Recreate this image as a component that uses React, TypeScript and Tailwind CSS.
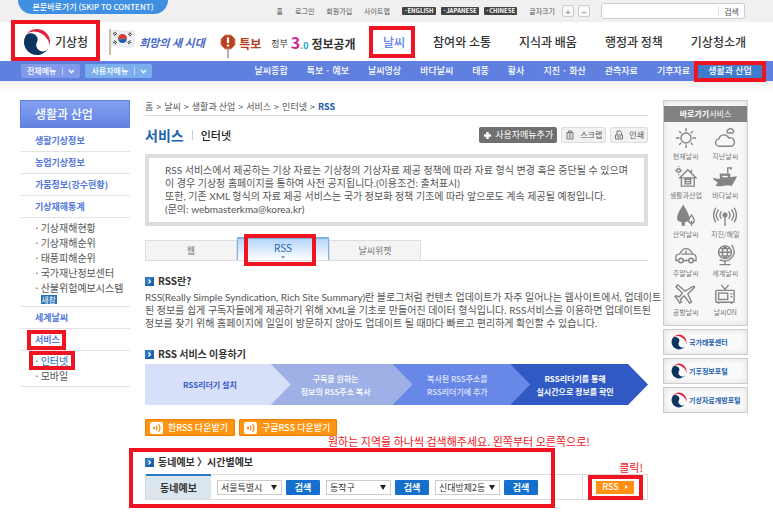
import type { ReactNode } from "react";

function Mark({ className }: { className: string }) {
  return <span aria-hidden="true" className={`pointer-events-none absolute z-20 border-4 border-[#ee1421] ${className}`} />;
}

function Taegeuk({ className }: { className: string }) {
  return (
    <svg viewBox="0 0 28 28" className={className} aria-hidden="true">
      <g transform="rotate(28 14 14)">
        <path d="M1 14A13 13 0 0 1 27 14A13 9.5 0 0 0 1 14Z" fill="#e8203f" />
        <path d="M1 14C1 7 14 6 14 14A6.5 6.5 0 0 0 27 14A13 13 0 0 1 1 14Z" fill="#0b355f" />
      </g>
    </svg>
  );
}

function Flag() {
  return (
    <svg viewBox="0 0 26 28" className="h-7 w-[26px]" aria-hidden="true">
      <path d="M1 1V27" stroke="#b9a26d" strokeWidth="1.4" />
      <path d="M2 3C8 0 14 6 25 2V18C15 22 9 15 2 18Z" fill="#eef2f6" stroke="#cfd8e0" strokeWidth=".5" />
      <path d="M9 10.500A4.500 4.500 0 0 1 18 10.500C16 13 14 9 13.500 10.500C12 12 10 12 9 10.500Z" fill="#dc3a32" />
      <path d="M9 10.500A4.500 4.500 0 0 0 18 10.500C16 13 14 9 13.500 10.500C12 12 10 12 9 10.500Z" fill="#1e5ca8" />
      <path d="M4 6l3-2M5 7.500l3-2M19 6l3 2M20 4.500l3 2M4 14l3 2M5 12.500l3 2M19 16l3-2M18.500 14.500l3-2" stroke="#333" strokeWidth="1" />
    </svg>
  );
}

function Chevron() {
  return (
    <svg viewBox="0 0 8 6" className="h-[5px] w-[7px]" fill="none" stroke="#fff" strokeWidth="1.600" aria-hidden="true">
      <path d="M1 1l3 3.500L7 1" />
    </svg>
  );
}

function NavDrop({ label, className }: { label: string; className: string }) {
  return (
    <button type="button" className={`flex h-[14px] items-center rounded-[2px] pl-[6px] text-[8px] leading-[14px] font-medium ${className}`}>
      {label}
      <span className="ml-[6px] flex h-2 items-center border-l border-white/50 px-[5px]">
        <Chevron />
      </span>
    </button>
  );
}

const subNav = ["날씨종합", "특보 · 예보", "날씨영상", "바다날씨", "태풍", "황사", "지진 · 화산", "관측자료", "기후자료"];

function Header() {
  return (
    <header>
      <div className="flex h-[22px] items-center bg-[#f0f0f0] pr-7 text-[7px] leading-[10px] text-[#555]">
        <a href="#content" className="ml-[18px] flex h-[14px] w-[150px] items-center justify-center self-start rounded-b-[14px] bg-[#3f8fe2] text-[8px] leading-3 font-medium text-white">
          본문바로가기 (SKIP TO CONTENT)
        </a>
        <nav className="ml-auto flex items-center gap-3">
          <a href="#home">홈</a>
          <a href="#login">로그인</a>
          <a href="#join">회원가입</a>
          <a href="#sitemap">사이트맵</a>
          <span className="flex gap-[5px] text-[6px] leading-[8px] font-bold text-white">
            <a href="#en" className="rounded-[1px] bg-[#444] px-[2px]">·ENGLISH</a>
            <a href="#ja" className="rounded-[1px] bg-[#444] px-[2px]">·JAPANESE</a>
            <a href="#zh" className="rounded-[1px] bg-[#444] px-[2px]">·CHINESE</a>
          </span>
          <span className="flex items-center gap-1">
            <span className="mr-[3px]">글자크기</span>
            <button type="button" aria-label="크게" className="h-3 w-3 rounded-[2px] border border-[#ccc] bg-[#f8f8f8] text-[8px] leading-[9px]">+</button>
            <button type="button" aria-label="작게" className="h-3 w-3 rounded-[2px] border border-[#ccc] bg-[#f8f8f8] text-[8px] leading-[9px]">−</button>
          </span>
        </nav>
        <form className="ml-[11px] flex h-4 w-36 items-center rounded-[3px] border border-[#ccc] bg-white">
          <input aria-label="검색어" className="h-3 min-w-0 flex-1 px-1 outline-none" />
          <button type="button" className="h-[10px] w-[26px] border-l border-[#ddd] text-[8px] leading-[9px]">검색</button>
        </form>
      </div>

      <div className="relative flex h-[39px] items-center pr-[27px] text-[12px] leading-4 font-medium text-[#333]">
        <Mark className="-top-[2px] left-[11px] h-[41px] w-[89px]" />
        <a href="#kma" className="ml-[23px] flex items-center gap-1">
          <Taegeuk className="h-7 w-7" />
          기상청
        </a>
        <div className="ml-[21px] flex items-center gap-1">
          <Flag />
          <span className="w-[81px] text-[11px] font-bold whitespace-nowrap text-[#4967c8] italic">희망의 새 시대</span>
        </div>
        <a href="#alert" className="mt-1 flex items-center gap-[3px] font-bold text-[#b4401f]">
          <svg viewBox="0 0 16 24" className="mt-1 h-6 w-4" aria-hidden="true">
            <path d="M8 14V24" stroke="#999" strokeWidth="1.500" />
            <path d="M5 1h6l4 4v6l-4 4H5l-4-4V5Z" fill="#b9411f" stroke="#d98a70" />
            <path d="M8 3.500V9" stroke="#fff" strokeWidth="2.200" />
            <circle cx="8" cy="11.500" r="1.300" fill="#fff" />
          </svg>
          특보
        </a>
        <a href="#gov30" className="mt-1 ml-[10px] flex items-center gap-[3px] font-bold">
          <span className="text-[9px] font-normal">정부</span>
          <span className="text-[16px] leading-4 font-bold text-[#d42a8c]">
            3<span className="text-[9px] text-[#6cb52d]">.</span>
            <span className="text-[9px] text-[#18a5cf]">0</span>
          </span>
          정보공개
        </a>
        <nav className="ml-auto flex gap-[28px]">
          <span className="relative">
            <Mark className="-top-2 -left-[14px] h-8 w-[46px]" />
            <a href="#weather" className="text-[#5f84e4]">날씨</a>
          </span>
          <a href="#participate">참여와 소통</a>
          <a href="#knowledge">지식과 배움</a>
          <a href="#policy">행정과 정책</a>
          <a href="#about">기상청소개</a>
        </nav>
      </div>

      <div className="flex h-5 items-center bg-[#5f80df] pr-[10px] pl-[21px] text-[9px] leading-[14px] font-medium text-white">
        <NavDrop label="전체메뉴" className="bg-[#819bea]" />
        <span className="w-[5px]" />
        <NavDrop label="사용자메뉴" className="bg-[#7aaeee]" />
        <nav className="ml-auto flex items-center gap-[19px]">
          {subNav.map((s) => (
            <a key={s} href={`#${s}`}>{s}</a>
          ))}
          <span className="relative -ml-3">
            <Mark className="-top-[3px] -left-[3px] h-[21px] w-[72px]" />
            <a href="#life" className="block w-[66px] bg-[#3f7ccb] text-center">생활과 산업</a>
          </span>
        </nav>
      </div>
    </header>
  );
}

function SideItem({ children }: { children: ReactNode }) {
  return (
    <a href="#menu" className="flex h-[22px] items-center border-b border-[#e4e4e4] pl-[15px] text-[9px] leading-3 font-bold text-[#5377dc]">
      {children}
    </a>
  );
}

function Sidebar() {
  return (
    <aside className="w-[110px] shrink-0">
      <h2 className="flex h-7 items-center border border-[#5f80df] bg-linear-to-b from-[#84a0f1] to-[#6283e0] pl-[14px] text-[12px] font-medium text-white">생활과 산업</h2>
      <div className="pt-[2px]">
        <SideItem>생활기상정보</SideItem>
        <SideItem>농업기상정보</SideItem>
        <SideItem>가뭄정보(강수현황)</SideItem>
        <SideItem>기상재해통계</SideItem>
      </div>
      <ul className="border-b border-[#e4e4e4] pt-[2px] pb-[2px] pl-[14px] text-[10px] leading-[15px] whitespace-nowrap text-[#555]">
        {["기상재해현황", "기상재해순위", "태풍피해순위", "국가재난정보센터"].map((s) => (
          <li key={s} className="flex gap-px"><span>·</span><a href="#sub">{s}</a></li>
        ))}
        <li className="flex gap-px">
          <span>·</span>
          <a href="#sub">
            산불위험예보시스템
            <span className="block w-4 bg-[#2873b8] text-center text-[8px] leading-[9px] text-white">새창</span>
          </a>
        </li>
      </ul>
      <SideItem>세계날씨</SideItem>
      <div className="relative">
        <Mark className="top-[1px] left-[7px] h-5 w-[39px]" />
        <SideItem>서비스</SideItem>
      </div>
      <ul className="relative border-b border-[#e4e4e4] pt-[2px] pb-[3px] pl-[14px] text-[10px] leading-[15px] text-[#555]">
        <Mark className="top-0 left-[9px] h-[19px] w-[46px]" />
        <li className="flex gap-px"><span>·</span><a href="#internet" className="text-[#1769b5] underline">인터넷</a></li>
        <li className="flex gap-px"><span>·</span><a href="#mobile">모바일</a></li>
      </ul>
    </aside>
  );
}

function Title({ children, className }: { children: ReactNode; className: string }) {
  return (
    <h2 className={`flex h-3 items-center gap-1 text-[10px] leading-3 font-bold text-[#333] ${className}`}>
      <svg viewBox="0 0 9 9" className="h-[9px] w-[9px]" aria-hidden="true">
        <rect width="9" height="9" fill="#1b62ac" />
        <path d="M0 0h9L0 9Z" fill="#4c8fd0" opacity=".5" />
        <path d="M3.500 2.500l2 2-2 2" stroke="#fff" strokeWidth="1.200" fill="none" />
      </svg>
      {children}
    </h2>
  );
}

function Download({ label }: { label: string }) {
  return (
    <button type="button" className="flex h-[17px] items-center gap-[5px] rounded-[1px] border border-[#f07f00] bg-[#ff9410] pr-[6px] pl-1 text-[9px] leading-3 font-medium text-white">
      <svg viewBox="0 0 13 12" className="h-3 w-[13px]" fill="none" aria-hidden="true">
        <rect width="13" height="12" rx="2" fill="#fff" />
        <circle cx="4" cy="6" r="1.200" fill="#f58a10" />
        <path d="M6 3.500q2 2.500 0 5M8.500 2q3 4 0 8" stroke="#f58a10" strokeWidth="1.200" />
      </svg>
      {label}
    </button>
  );
}

function Picker({ label, value }: { label: string; value: string }) {
  return (
    <span className="flex items-center gap-1">
      <span className="relative flex">
        <select aria-label={label} className="h-[15px] w-[65px] appearance-none border border-[#ccc] bg-white pl-[3px] text-[9px] leading-[13px] text-[#333]">
          <option>{value}</option>
        </select>
        <svg viewBox="0 0 6 5" className="pointer-events-none absolute top-[5px] right-[5px] h-[5px] w-[6px]" aria-hidden="true">
          <path d="M0 0h6L3 5Z" fill="#222" />
        </svg>
      </span>
      <button type="button" className="h-[15px] w-[34px] rounded-[1px] bg-[#1470cc] text-[9px] leading-[15px] font-bold text-white">검색</button>
    </span>
  );
}

const crumbs = ["홈", "날씨", "생활과 산업", "서비스", "인터넷"];

function Content() {
  return (
    <main id="content" className="min-w-0 flex-1">
      <nav className="flex h-4 items-center gap-[3px] border-b border-[#ddd] pb-[2px] text-[9px] leading-3 text-[#555]">
        {crumbs.map((c) => (
          <span key={c} className="flex gap-[3px]"><a href="#crumb">{c}</a><span>&gt;</span></span>
        ))}
        <b className="text-[#1a5ca8]">RSS</b>
      </nav>

      <div className="mt-[11px] flex h-4 items-center text-[9px] leading-3">
        <h1 className="text-[14px] leading-4 font-bold text-[#1a66b2]">서비스</h1>
        <span className="mx-2 h-[10px] w-px bg-[#ccc]" />
        <span className="text-[11px] font-medium text-[#222]">인터넷</span>
        <div className="ml-auto flex gap-1">
          <button type="button" className="flex h-4 items-center gap-[3px] rounded-[2px] bg-[#707070] px-1 text-white">
            <svg viewBox="0 0 9 9" className="h-[9px] w-[9px]" aria-hidden="true"><path d="M4.500 1v7M1 4.500h7" stroke="#fff" strokeWidth="2.400" /></svg>
            사용자메뉴추가
          </button>
          <button type="button" className="flex h-4 items-center gap-[5px] rounded-[2px] border border-[#ddd] bg-[#f1f1f1] px-[3px] text-[8px] text-[#555]">
            <svg viewBox="0 0 10 10" className="h-[10px] w-[10px]" fill="none" stroke="#777" aria-hidden="true"><path d="M2 2.500h6V9H2ZM3.500 1h3v2h-3ZM3.500 5h3M3.500 7h3" /></svg>
            스크랩
          </button>
          <button type="button" className="flex h-4 items-center gap-[5px] rounded-[2px] border border-[#ddd] bg-[#f1f1f1] px-[3px] text-[8px] text-[#555]">
            <svg viewBox="0 0 10 10" className="h-[10px] w-[10px]" fill="none" stroke="#777" aria-hidden="true"><path d="M3 5V1h3l1.500 1.500V5M1.500 5h7v4h-7ZM3 7h4" /></svg>
            인쇄
          </button>
        </div>
      </div>

      <p className="mt-[11px] border-4 border-[#ddd] px-4 py-[6px] font-['Lato','Noto_Sans_CJK_KR',sans-serif] text-[10px] leading-[13px] whitespace-nowrap text-[#555]">
        RSS 서비스에서 제공하는 기상 자료는 기상청의 기상자료 제공 정책에 따라 자료 형식 변경 혹은 중단될 수 있으며<br />
        이 경우 기상청 홈페이지를 통하여 사전 공지됩니다.(이용조건: 출처표시)<br />
        또한, 기존 XML 형식의 자료 제공 서비스는 국가 정보화 정책 기조에 따라 앞으로도 계속 제공될 예정입니다.<br />
        (문의: webmasterkma@korea.kr)
      </p>

      <div className="mt-[11px] flex items-end border-b border-[#ddd] text-[9px] leading-3 text-[#777]">
        <button type="button" className="h-5 w-[92px] border border-b-0 border-[#ddd] bg-[#f4f4f4]">웹</button>
        <span className="relative">
          <Mark className="-top-[3px] left-[7px] h-8 w-[72px]" />
          <button type="button" className="flex h-[23px] w-[92px] flex-col items-center border border-t-2 border-b-0 border-[#7fb2e6] bg-linear-to-b from-[#b5d6f9] to-white pt-[3px] text-[10px] leading-3 text-[#2467ad]">
            RSS
            <svg viewBox="0 0 4 3" className="mt-[2px] h-[3px] w-1" aria-hidden="true"><path d="M0 0h4L2 3Z" fill="#7c9cc0" /></svg>
          </button>
        </span>
        <button type="button" className="h-5 w-[92px] border border-b-0 border-[#ddd] bg-[#f4f4f4]">날씨위젯</button>
      </div>

      <Title className="mt-[14px]">RSS란?</Title>
      <p className="mt-1 font-['Lato','Noto_Sans_CJK_KR',sans-serif] text-[10px] leading-[13px] whitespace-nowrap text-[#555]">
        RSS(Really Simple Syndication, Rich Site Summary)란 블로그처럼 컨텐츠 업데이트가 자주 일어나는 웹사이트에서, 업데이트<br />
        된 정보를 쉽게 구독자들에게 제공하기 위해 XML을 기초로 만들어진 데이터 형식입니다. RSS서비스를 이용하면 업데이트된<br />
        정보를 찾기 위해 홈페이지에 일일이 방문하지 않아도 업데이트 될 때마다 빠르고 편리하게 확인할 수 있습니다.
      </p>

      <Title className="mt-[18px]">RSS 서비스 이용하기</Title>
      <ol className="mt-1 flex h-[41px] text-center text-[8px] leading-[13px] font-medium text-white">
        <li className="z-[4] flex flex-1 items-center justify-center bg-[#d8dff8] pr-4 font-bold text-[#3a5bc8] [clip-path:polygon(0_0,calc(100%-20px)_0,100%_50%,calc(100%-20px)_100%,0_100%)]">RSS리더기 설치</li>
        <li className="z-[3] -ml-5 flex flex-1 items-center justify-center bg-[#9fb0e6] pr-3 [clip-path:polygon(0_0,calc(100%-20px)_0,100%_50%,calc(100%-20px)_100%,0_100%)]">구독을 원하는<br />정보의 RSS주소 복사</li>
        <li className="z-[2] -ml-5 flex flex-1 items-center justify-center bg-[#6888e8] pr-2 text-[#e0e7fc] [clip-path:polygon(0_0,calc(100%-20px)_0,100%_50%,calc(100%-20px)_100%,0_100%)]">복사된 RSS주소를<br />RSS리더기에 추가</li>
        <li className="z-[1] -ml-5 flex flex-1 items-center justify-center bg-[#3159c4] pr-2 font-bold [clip-path:polygon(0_0,calc(100%-20px)_0,100%_50%,calc(100%-20px)_100%,0_100%)]">RSS리더기를 통해<br />실시간으로 정보를 확인</li>
      </ol>

      <div className="relative mt-[14px] flex gap-1">
        <Download label="한RSS 다운받기" />
        <Download label="구글RSS 다운받기" />
        <span className="absolute top-[15px] left-[183px] text-[11px] leading-[14px] whitespace-nowrap text-[#ee1421]">원하는 지역을 하나씩 검색해주세요. 왼쪽부터 오른쪽으로!</span>
      </div>

      <section className="relative mt-5">
        <Mark className="-top-[8px] -left-4 h-[60px] w-[426px]" />
        <Title className="">동네예보 〉시간별예보</Title>
        <div className="mt-[6px] flex h-[26px] items-stretch border border-[#ddd] border-l-[#ccd6e0]">
          <h3 className="-mt-px flex w-[65px] items-center justify-center border-t-2 border-[#2b7bca] bg-[#dce6ef] text-[10px] font-bold text-[#333]">동네예보</h3>
          <div className="flex flex-1 items-center gap-[6px] pl-[6px]">
            <Picker label="시도" value="서울특별시" />
            <Picker label="시군구" value="동작구" />
            <Picker label="읍면동" value="신대방제2동" />
          </div>
          <div className="relative flex w-[65px] items-center justify-center border-l border-[#ddd]">
            <Mark className="top-0 left-[5px] h-[25px] w-[55px]" />
            <span className="absolute -top-[15px] right-1 text-[11px] leading-[14px] text-[#ee1421]">클릭!</span>
            <button type="button" className="flex h-[13px] w-[38px] items-center justify-center gap-[6px] bg-[#ff9012] text-[9px] leading-3 font-medium text-white">
              RSS
              <svg viewBox="0 0 3 4" className="h-1 w-[3px]" aria-hidden="true"><path d="M0 0l3 2-3 2Z" fill="#fff" /></svg>
            </button>
          </div>
        </div>
      </section>
    </main>
  );
}

const icons: { label: string; art: ReactNode }[] = [
  { label: "현재날씨", art: <><circle cx="12" cy="12" r="5.500" /><path d="M12 1v4M12 19v4M1 12h4M19 12h4M4.500 4.500l2.300 2.300M17.200 17.200l2.300 2.300M4.500 19.500l2.300-2.300M17.200 6.800l2.300-2.300" /></> },
  { label: "지난날씨", art: <><path d="M6 21a4 4 0 0 1-.5-8 5.500 5.500 0 0 1 10.500-1 4.500 4.500 0 0 1 3 9Z" /><path d="M15 6.500a2 2 0 0 1 .5-3.500 3 3 0 0 1 5 0 2 2 0 0 1 0 3.500Z" /></> },
  { label: "생활과산업", art: <><circle cx="4" cy="5" r="2" /><path d="M4 0v1M4 9v1M0 5h1M7 5h1M7 13v9h14v-9M5 13l9-9 9 9ZM18 4v3M11 14.500h6v5h-6ZM11 17h6" /></> },
  { label: "바다날씨", art: <><path d="M0 14l7 1V9h10v4l7-1-5 9c-6-3-9 2-16 0l2-3Z" fill="#858585" /><path d="M15 8V2h4l-1 2" /><path d="M9 11.500h6" stroke="#fff" /></> },
  { label: "산악날씨", art: <><path d="M9 1C6 6 3 10 3 14q0 4 5 4v4h2v-4q4 0 5-3C15 10 11 5 9 1Z" fill="#858585" /><path d="M18 11c-2 3-3 4-3 6q0 3 3 3t3-3c0-2-1-3-3-6ZM18 17v6" fill="#fff" /></> },
  { label: "지진/해일", art: <><circle cx="12" cy="11" r="2" fill="#858585" /><path d="M12 12v11M8 7q-3 4 0 8M5 5q-5 6 0 12M2 3q-5 8 0 16M16 7q3 4 0 8M19 5q5 6 0 12M22 3q5 8 0 16" /></> },
  { label: "주말날씨", art: <><path d="M4 18H1v-4q0-3 4-3 3-6 7-6 5 0 7 6 4 0 4 4v3h-3M9 18h6M7 11h11M12 7v4" /><circle cx="6.500" cy="18" r="2.500" /><circle cx="17.500" cy="18" r="2.500" /></> },
  { label: "세계날씨", art: <><circle cx="12" cy="9" r="7" /><path d="M5 9h14M7 5h10M7 13h10M12 2q-6 7 0 14M12 2q6 7 0 14M19 1q7 9-2 16-5 3-11 0M12 18v4M6 22.500h12" /></> },
  { label: "공항날씨", art: <path d="M3 2l8 7 8-5q3-1 2 1l-7 7 4 9-2 1-6-8-4 4 1 3-2 1-2-4-3-3 1-1 4 1 3-4L1 4Z" /> },
  { label: "날씨ON", art: <><rect x="2" y="8" width="20" height="13" rx="1" /><rect x="5" y="11" width="10" height="7" /><path d="M8 2l4 5 4-5M18 12h2M18 15h2M5 21v2M19 21v2" /></> },
];

function QuickLinks() {
  return (
    <aside className="w-[85px] shrink-0">
      <div className="border border-[#ccc] bg-[#f7f7f7] pt-[5px] pb-[3px] shadow-[inset_0_0_6px_#ddd]">
        <h2 className="h-4 bg-[#828282] text-center text-[8px] leading-4 text-white"><b>바로가기</b>서비스</h2>
        <ul className="mt-[5px] grid grid-cols-2 px-[2px]">
          {icons.map((i) => (
            <li key={i.label}>
              <a href="#quick" className="flex h-[39px] flex-col items-center text-[7px] leading-[10px] whitespace-nowrap text-[#777]">
                <svg viewBox="-1 0 26 24" className="mb-[2px] h-[22px] w-6" fill="none" stroke="#858585" strokeWidth="1.500" aria-hidden="true">{i.art}</svg>
                {i.label}
              </a>
            </li>
          ))}
        </ul>
      </div>
      <div className="mt-[3px] flex flex-col gap-[3px] text-[7px] leading-[10px] font-bold whitespace-nowrap text-[#1c5fae]">
        {["국가태풍센터", "기후정보포털", "기상자료개방포털"].map((s) => (
          <a key={s} href="#portal" className="flex h-[26px] items-center gap-[2px] border border-[#ccc] bg-[#fafafa] pl-[7px] shadow-[inset_0_0_6px_#ddd]">
            <Taegeuk className="h-4 w-4" />
            {s}
          </a>
        ))}
      </div>
    </aside>
  );
}

export default function App() {
  return (
    <div className="min-h-screen overflow-x-hidden bg-white font-['Noto_Sans_CJK_KR','Liberation_Sans',sans-serif]">
      <Header />
      <div className="flex gap-[15px] bg-[linear-gradient(#efefef,#fff_11px)] pt-[19px] pr-[25px] pl-5">
        <Sidebar />
        <Content />
        <QuickLinks />
      </div>
    </div>
  );
}
